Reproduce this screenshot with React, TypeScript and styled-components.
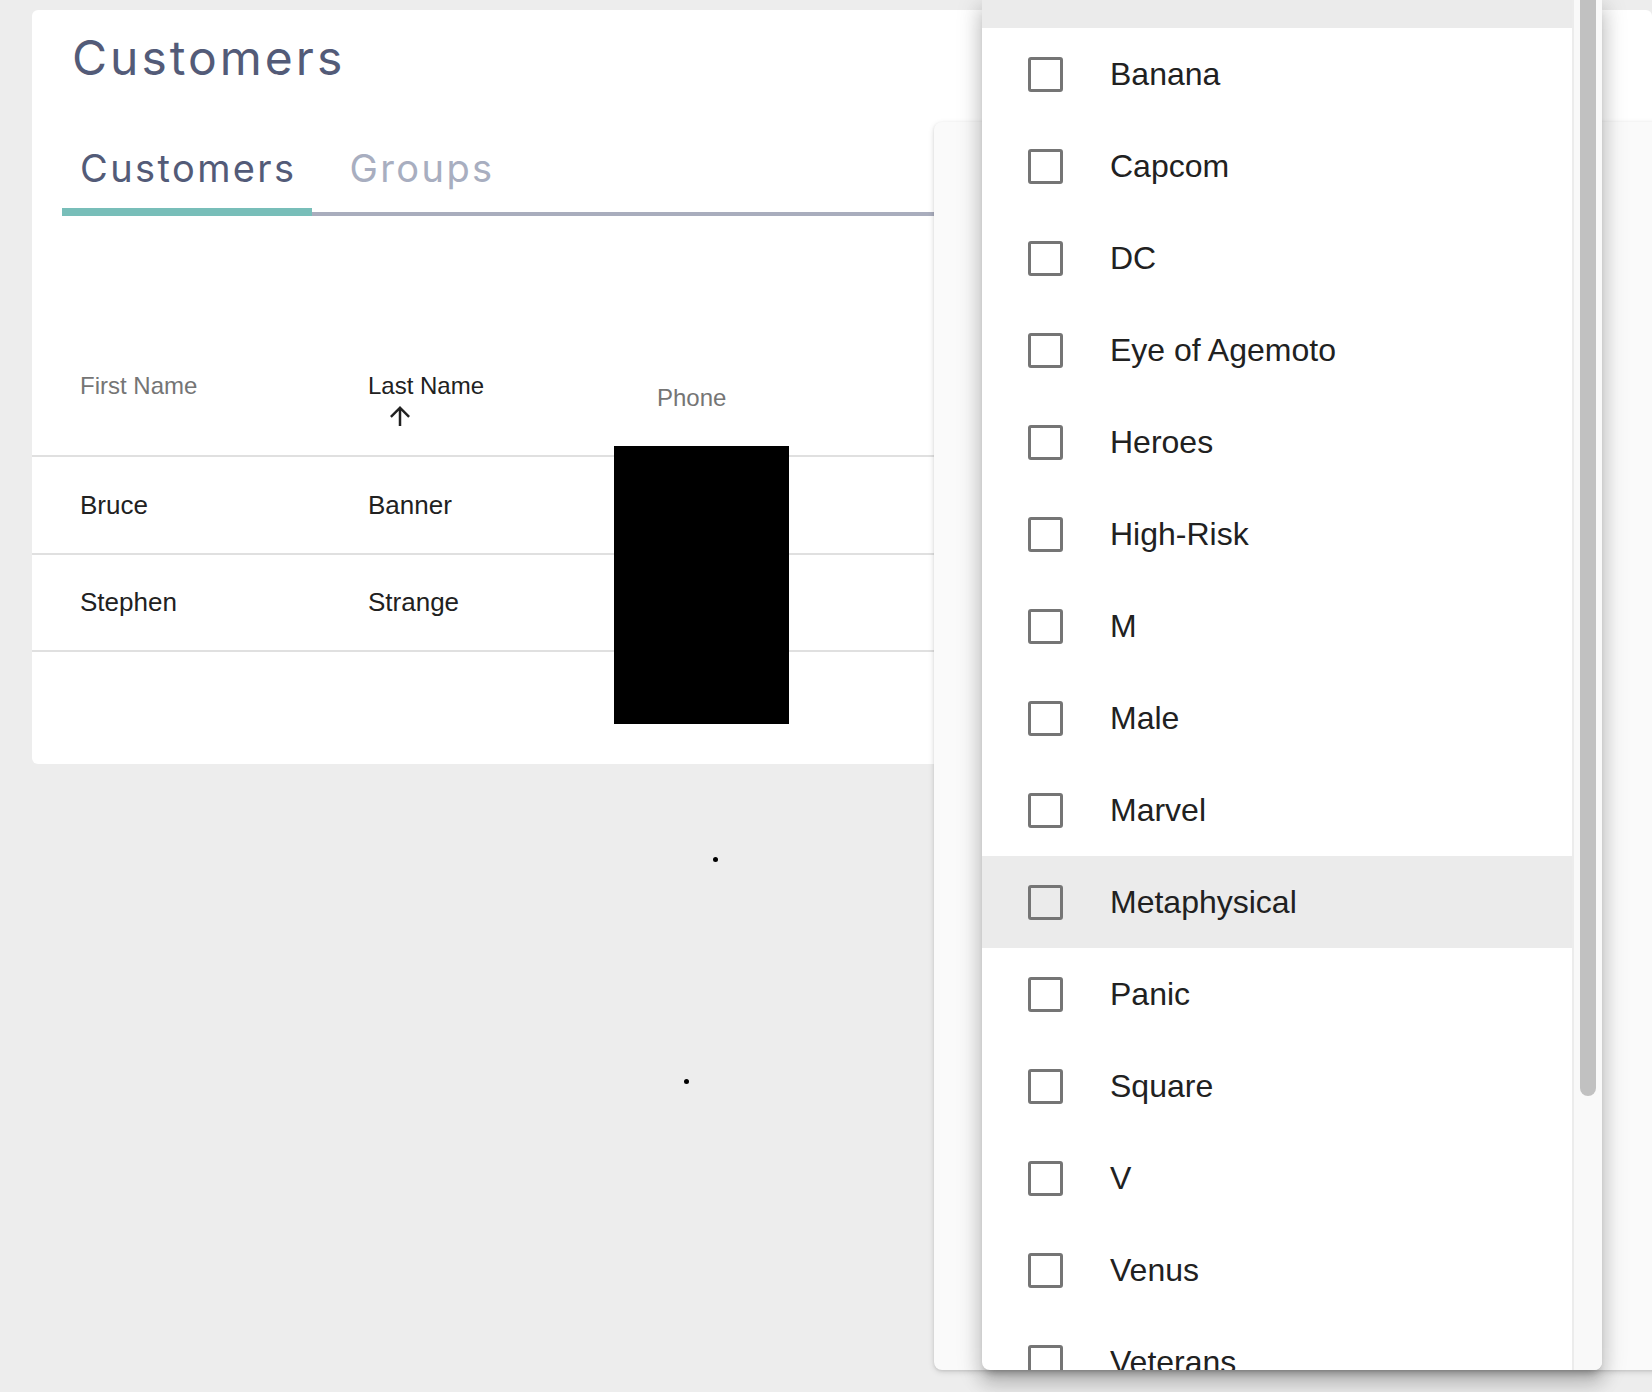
import styled, { createGlobalStyle } from "styled-components";

const GlobalStyle = createGlobalStyle`
  html, body {
    margin: 0;
    padding: 0;
    background: #ededed;
  }
  * {
    box-sizing: border-box;
  }
`;

const Page = styled.div`
  position: relative;
  height: 1392px;
  overflow: hidden;
  background: #ededed;
  padding: 10px 0 0 32px;
  font-family: "Liberation Sans", Arial, sans-serif;
`;

const Card = styled.div`
  position: relative;
  background: #fff;
  border-radius: 6px;
  padding: 18px 0 112px;
`;

const Title = styled.h1`
  margin: 0 0 57px 40px;
  font-family: Inter, "Noto Sans", sans-serif;
  font-weight: 400;
  font-size: 48px;
  line-height: 60px;
  letter-spacing: 3px;
  color: #535b78;
`;

const TabList = styled.div`
  display: flex;
  gap: 20px;
  margin-left: 30px;
  border-bottom: 4px solid #a9adbd;
`;

const Tab = styled.div<{ $active?: boolean }>`
  position: relative;
  padding: 0 15px 21px 18px;
  font-family: Inter, "Noto Sans", sans-serif;
  font-size: 38px;
  line-height: 46px;
  letter-spacing: 2.4px;
  color: ${(p) => (p.$active ? "#535b78" : "#a8aec0")};
  &::after {
    content: "";
    display: ${(p) => (p.$active ? "block" : "none")};
    position: absolute;
    left: 0;
    right: 0;
    bottom: -4px;
    height: 8px;
    background: #78beb9;
  }
`;

const Table = styled.div`
  position: relative;
  margin-top: 122px;
`;

const Row = styled.div<{ $head?: boolean }>`
  display: grid;
  grid-template-columns: 288px 289px 289px 1fr;
  align-items: center;
  min-height: ${(p) => (p.$head ? "0" : "97.5px")};
  border-bottom: 2px solid #e0e0e0;
`;

const Cell = styled.div<{ $head?: boolean; $active?: boolean }>`
  padding: ${(p) => (p.$head ? "30px 0 24px 48px" : "0 0 0 48px")};
  font-size: ${(p) => (p.$head ? "24px" : "26px")};
  line-height: 36px;
  color: ${(p) => (p.$head && !p.$active ? "#757575" : "#212121")};
`;

const PlainHead = styled.span`
  display: block;
  margin-top: -3px;
`;

const SortLabel = styled.div`
  display: flex;
  flex-direction: column;
  align-items: flex-start;
`;

const SortIcon = styled.svg<{ $hidden?: boolean }>`
  width: 30px;
  height: 30px;
  margin: -3px 0 0 17px;
  visibility: ${(p) => (p.$hidden ? "hidden" : "visible")};
`;

const Redaction = styled.div`
  position: absolute;
  left: 582px;
  top: 108px;
  width: 175px;
  height: 278px;
  background: #000;
`;

const Dot = styled.span`
  position: absolute;
  width: 5px;
  height: 5px;
  border-radius: 50%;
  background: #000;
`;

const SidePanel = styled.div`
  position: absolute;
  left: 934px;
  top: 122px;
  right: -20px;
  height: 1248px;
  background: #fafafa;
  border-radius: 8px;
  box-shadow: 0 2px 6px rgba(0, 0, 0, 0.12), 0 1px 3px rgba(0, 0, 0, 0.1);
`;

const Menu = styled.div`
  position: absolute;
  left: 982px;
  top: 0;
  width: 620px;
  height: 1370px;
  display: flex;
  background: #fff;
  border-radius: 0 0 8px 8px;
  overflow: hidden;
  box-shadow: 0 9px 9px -5px rgba(0, 0, 0, 0.2), 0 14px 18px 2px rgba(0, 0, 0, 0.14),
    0 5px 25px 4px rgba(0, 0, 0, 0.12);
`;

const MenuList = styled.ul`
  flex: 1;
  margin: 0;
  padding: 0;
  list-style: none;
`;

const ScrolledEdge = styled.li`
  height: 28px;
  background: #ebebeb;
`;

const MenuItem = styled.li<{ $hover?: boolean }>`
  display: flex;
  align-items: center;
  height: 92px;
  padding-left: 46px;
  gap: 47px;
  background: ${(p) => (p.$hover ? "#ebebeb" : "transparent")};
  font-size: 32px;
  color: #212121;
`;

const Box = styled.span`
  width: 35px;
  height: 35px;
  border: 3.5px solid #757575;
  border-radius: 3px;
  flex-shrink: 0;
`;

const Track = styled.div`
  width: 30px;
  background: #f9f9f9;
  border-left: 2px solid #ececec;
  padding-left: 6px;
`;

const Thumb = styled.div`
  width: 16px;
  height: 1096px;
  background: #c1c1c1;
  border-radius: 0 0 8px 8px;
`;

const customers = [
  { first: "Bruce", last: "Banner" },
  { first: "Stephen", last: "Strange" },
];

const tags = [
  "Banana",
  "Capcom",
  "DC",
  "Eye of Agemoto",
  "Heroes",
  "High-Risk",
  "M",
  "Male",
  "Marvel",
  "Metaphysical",
  "Panic",
  "Square",
  "V",
  "Venus",
  "Veterans",
];

function Arrow({ hidden }: { hidden?: boolean }) {
  return (
    <SortIcon $hidden={hidden} viewBox="0 0 24 24">
      <path
        fill="#212121"
        d="M4 12l1.41 1.41L11 7.83V20h2V7.83l5.58 5.59L20 12l-8-8-8 8z"
      />
    </SortIcon>
  );
}

export default function App() {
  return (
    <Page>
      <GlobalStyle />
      <Card>
        <Title>Customers</Title>
        <TabList>
          <Tab $active>Customers</Tab>
          <Tab>Groups</Tab>
        </TabList>
        <Table>
          <Row $head>
            <Cell $head>
              <SortLabel>
                First Name
                <Arrow hidden />
              </SortLabel>
            </Cell>
            <Cell $head $active>
              <SortLabel>
                Last Name
                <Arrow />
              </SortLabel>
            </Cell>
            <Cell $head>
              <PlainHead>Phone</PlainHead>
            </Cell>
            <Cell $head />
          </Row>
          {customers.map((c) => (
            <Row key={c.first}>
              <Cell>{c.first}</Cell>
              <Cell>{c.last}</Cell>
              <Cell />
              <Cell />
            </Row>
          ))}
          <Redaction />
        </Table>
      </Card>

      <Dot style={{ left: 713, top: 857 }} />
      <Dot style={{ left: 684, top: 1079 }} />

      <SidePanel />
      <Menu>
        <MenuList>
          <ScrolledEdge />
          {tags.map((t) => (
            <MenuItem key={t} $hover={t === "Metaphysical"}>
              <Box />
              {t}
            </MenuItem>
          ))}
        </MenuList>
        <Track>
          <Thumb />
        </Track>
      </Menu>
    </Page>
  );
}
